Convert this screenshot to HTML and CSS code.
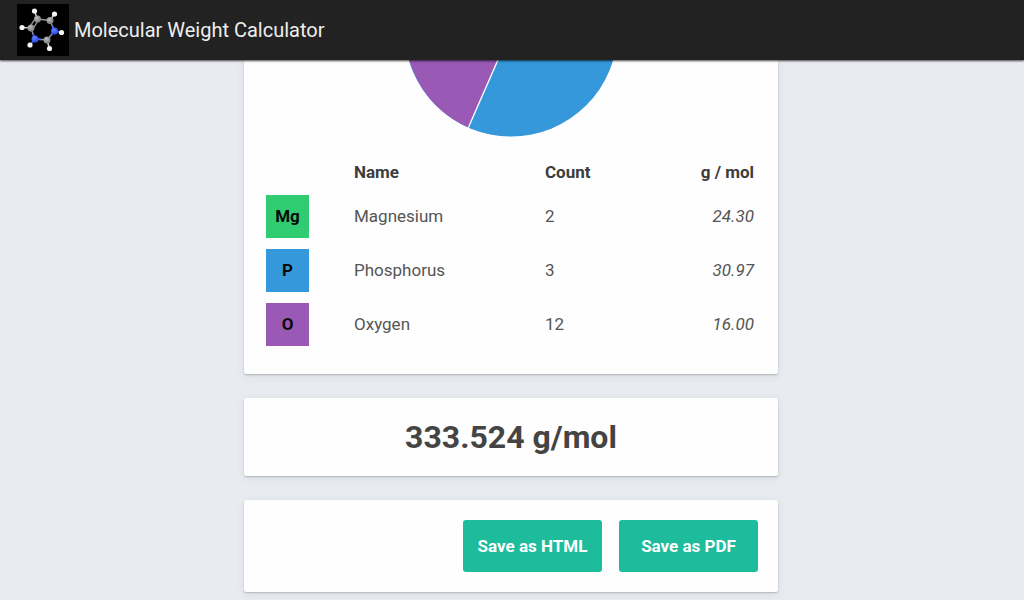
FILE: index.html
```html
<!DOCTYPE html>
<html lang="en">
<head>
<meta charset="utf-8">
<meta name="viewport" content="width=device-width, initial-scale=1">
<title>Molecular Weight Calculator</title>
<link rel="stylesheet" href="styles.css">
</head>
<body>
<header class="app-bar">
  <svg class="logo" viewBox="0 0 52 52" aria-hidden="true">
    <defs>
      <radialGradient id="carbon" cx="40%" cy="35%"><stop offset="0" stop-color="#bdbdbd"/><stop offset="1" stop-color="#888"/></radialGradient>
      <radialGradient id="nitrogen" cx="40%" cy="35%"><stop offset="0" stop-color="#6583ff"/><stop offset="1" stop-color="#3453ea"/></radialGradient>
    </defs>
    <rect width="52" height="52" fill="#000"/>
    <g stroke="#999" stroke-width="1.4" fill="none">
      <path d="M20.500 15 33 16.500M33 16.500 37.500 27M30 36 18 35M18 35 14 24.500M12.800 23 18.800 13.500M15.800 25 21.800 15.500M37.500 27 30 36"/>
    </g>
    <g stroke="#ccc" stroke-width="1.600">
      <path d="M20.500 15 17.500 7.500M33 16.500 37.500 10M14 24 5.500 23.500M30 36 32.500 44.500"/>
    </g>
    <path d="M37.500 27 44.500 28.500M18 35 13 41M37.500 27 34 31.500M18 35 24 35.500M37.500 27 35.500 22M18 35 16 30" stroke="#4662e8" stroke-width="1.600"/>
    <g fill="url(#carbon)"><circle cx="20.500" cy="15" r="3.500"/><circle cx="33" cy="16.500" r="3.500"/><circle cx="14" cy="24" r="3.500"/><circle cx="30" cy="36" r="3.500"/></g>
    <g fill="url(#nitrogen)"><circle cx="37.500" cy="27" r="3.500"/><circle cx="18" cy="35" r="3.500"/></g>
    <g fill="#f4f4f4"><circle cx="17.500" cy="7" r="2.600"/><circle cx="37.500" cy="10" r="2.600"/><circle cx="5" cy="23.500" r="2.600"/><circle cx="44.500" cy="28.500" r="2.600"/><circle cx="13" cy="41" r="2.600"/><circle cx="32.500" cy="44.500" r="2.600"/></g>
  </svg>
  <h1 class="title">Molecular Weight Calculator</h1>
</header>
<main class="content">
  <section class="card breakdown">
    <svg class="pie" viewBox="0 30 212 77" role="img" aria-label="Share of molecular weight by element">
      <circle cx="106" cy="0" r="106.500" fill="#3598db"/>
      <path d="M106 0 63.300 97.500A106.500 106.500 0 0 1 0 0Z" fill="#9a59b5"/>
      <path d="M106 0 63.300 97.700" stroke="#fff" stroke-width="1.300"/>
    </svg>
    <table class="elements">
      <colgroup><col class="col-symbol"><col class="col-name"><col><col></colgroup>
      <thead>
        <tr><td></td><th scope="col">Name</th><th scope="col">Count</th><th scope="col" class="mass">g / mol</th></tr>
      </thead>
      <tbody>
        <tr><td><div class="tile green">Mg</div></td><td>Magnesium</td><td>2</td><td class="mass">24.30</td></tr>
        <tr><td><div class="tile blue">P</div></td><td>Phosphorus</td><td>3</td><td class="mass">30.97</td></tr>
        <tr><td><div class="tile purple">O</div></td><td>Oxygen</td><td>12</td><td class="mass">16.00</td></tr>
      </tbody>
    </table>
  </section>
  <section class="card total">333.524 g/mol</section>
  <section class="card actions">
    <button class="button" type="button">Save as HTML</button>
    <button class="button" type="button">Save as PDF</button>
  </section>
</main>
</body>
</html>
```
FILE: styles.css
```css
* { box-sizing: border-box; }
body {
  margin: 0;
  background: #e8ebf0;
  color: #555;
  font-family: Roboto, "Liberation Sans", sans-serif;
  font-size: 17px;
  line-height: 20px;
}
.app-bar {
  position: relative;
  display: flex;
  align-items: center;
  gap: 5px;
  padding: 4px 17px;
  background: #222;
  box-shadow: 0 1px 2px rgba(0, 0, 0, .7);
}
.logo { display: block; width: 52px; height: 52px; }
.title { margin: 0; color: #eee; font-size: 20px; font-weight: 400; line-height: 24px; }
.content {
  display: flex;
  flex-direction: column;
  gap: 24px;
  max-width: 552px;
  margin: 0 auto;
  padding: 0 10px 8px 8px;
}
.card {
  background: #fefefe;
  border-radius: 2px;
  box-shadow: 0 1px 2px rgba(0, 0, 0, .22), 0 2px 10px rgba(60, 70, 90, .07);
}
.breakdown { padding: 0 22px 23px; border-radius: 0 0 2px 2px; }
.pie { display: block; width: 212px; height: 77px; margin: 0 auto; }
.elements { width: 100%; margin-top: 18px; border-collapse: collapse; table-layout: fixed; }
.elements td, .elements th { padding: 0; text-align: left; }
.elements th { color: #3c3c3c; font-weight: 700; }
.elements thead tr { height: 34px; }
.elements tbody tr { height: 54px; }
.elements .mass { padding-right: 2px; text-align: right; }
.elements td.mass { font-style: italic; }
.col-symbol { width: 88px; }
.col-name { width: 191px; }
.tile {
  width: 43px;
  height: 43px;
  color: #0a0a0a;
  font-weight: 700;
  line-height: 43px;
  text-align: center;
}
.green { background: #2fcc71; }
.blue { background: #3598db; }
.purple { background: #9a59b5; }
.total { padding: 20px; color: #444; font-size: 32px; font-weight: 700; line-height: 38px; text-align: center; }
.actions { display: flex; justify-content: flex-end; gap: 17px; padding: 20px; }
.button {
  width: 139px;
  height: 52px;
  padding: 0;
  border: 0;
  border-radius: 3px;
  background: #1dbc9c;
  color: #fff;
  font: 700 17px/20px Roboto, "Liberation Sans", sans-serif;
}
```
